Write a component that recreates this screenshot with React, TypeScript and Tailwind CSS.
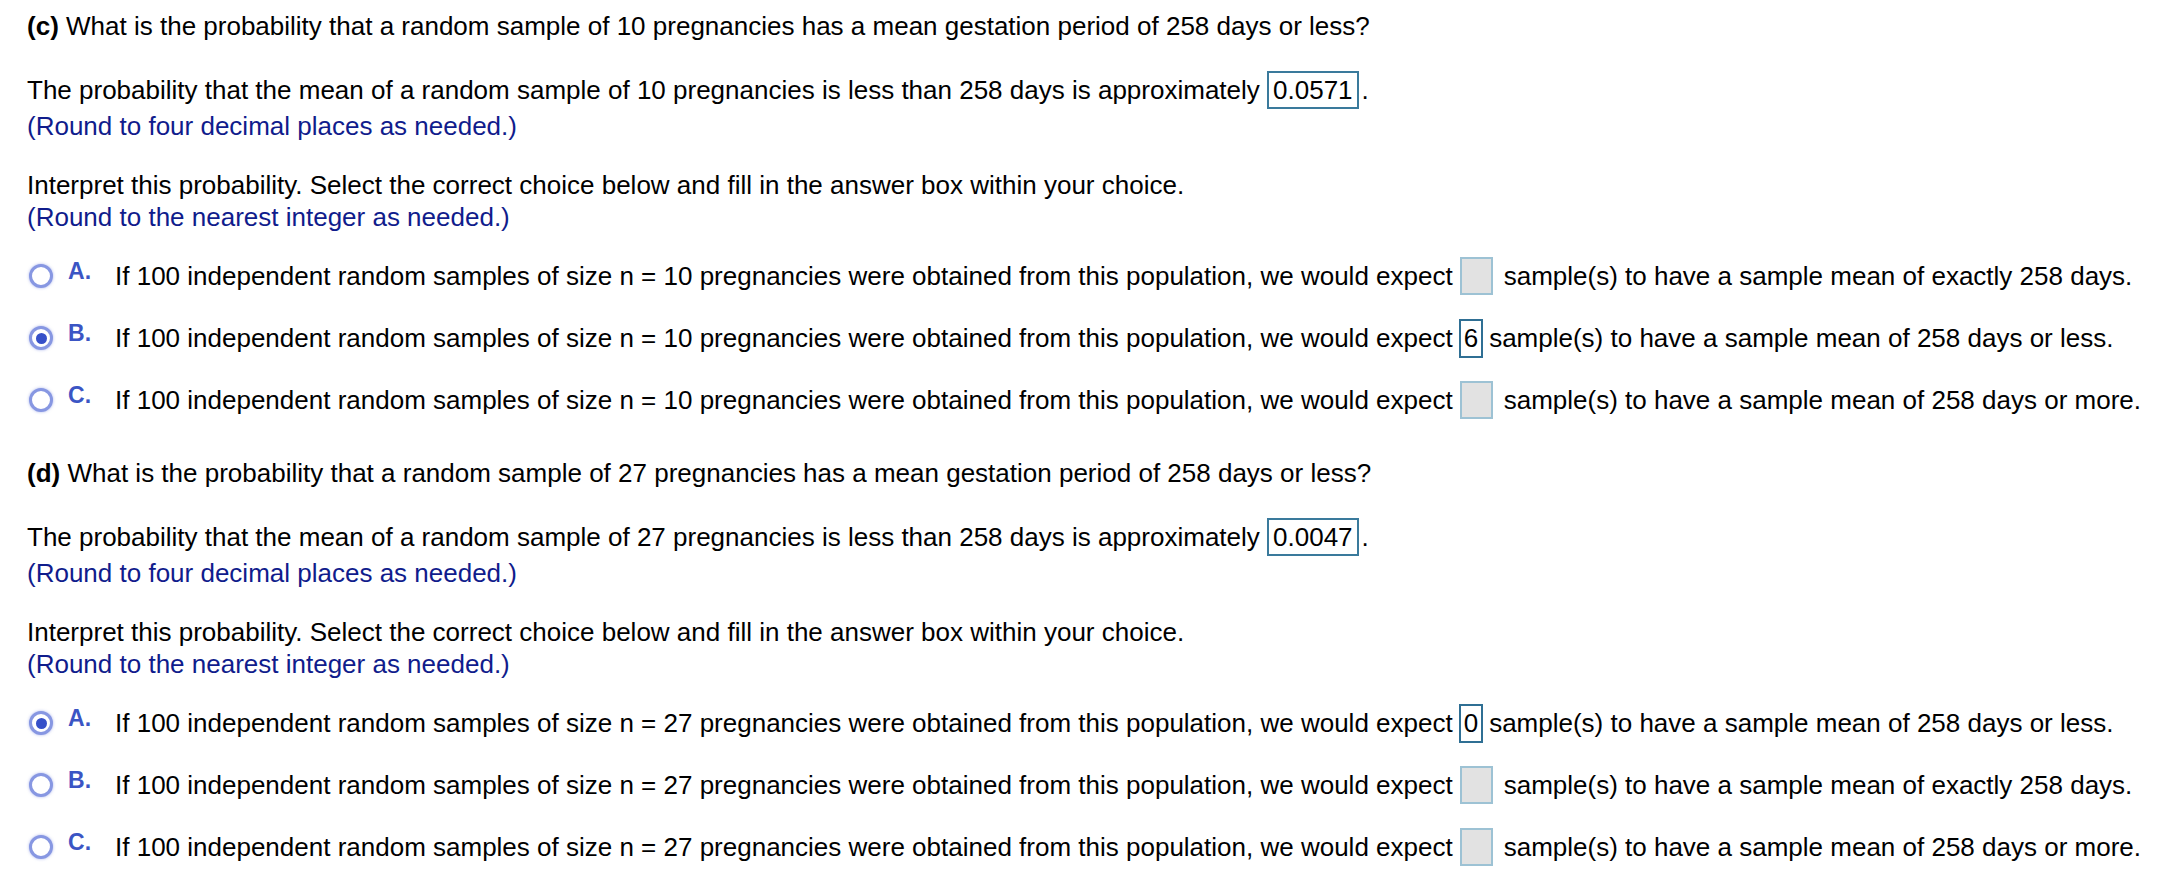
import React from 'react';

type Choice = {
  letter: string;
  selected?: boolean;
  value?: string;
  tail: string;
};

const Radio = ({ selected }: { selected?: boolean }) => (
  <span className="relative flex h-[24px] w-[24px] shrink-0 items-center justify-center rounded-full border-[3px] border-[#8797e2] bg-white shadow-[0_0_3px_rgba(90,110,220,0.5)]">
    {selected && <span className="h-[11px] w-[11px] rounded-full bg-[#3650c9]" />}
  </span>
);

const AnswerBox = ({ value }: { value?: string }) =>
  value ? (
    <span className="mx-[6px] inline-flex h-[39px] items-center border-2 border-[#2f6f94] px-[3px] leading-none">{value}</span>
  ) : (
    <span className="ml-[7px] mr-[11px] inline-block h-[38px] w-[33px] border-2 border-[#9dc2d4] bg-[#e2e2e2]" />
  );

const ChoiceRow = ({ n, c }: { n: number; c: Choice }) => (
  <div className="flex h-[40px] items-center">
    <div className="ml-[2px] w-[39px]">
      <Radio selected={c.selected} />
    </div>
    <span className="w-[47px] -translate-y-[5px] text-[23px] font-bold text-[#3b55c4]">{c.letter}.</span>
    <span className="flex items-center whitespace-pre">
      {`If 100 independent random samples of size n = ${n} pregnancies were obtained from this population, we would expect`}
      <AnswerBox value={c.value} />
      {c.tail}
    </span>
  </div>
);

const Part = ({
  label,
  n,
  prob,
  choices,
}: {
  label: string;
  n: number;
  prob: string;
  choices: Choice[];
}) => (
  <div>
    <div className="leading-[32px]">
      <span className="font-bold">({label})</span> What is the probability that a random sample of {n} pregnancies has a mean gestation period of 258 days or less?
    </div>
    <div className="mt-[32px] flex h-[32px] items-center whitespace-pre">
      {`The probability that the mean of a random sample of ${n} pregnancies is less than 258 days is approximately `}
      <span className="inline-flex h-[38px] items-center border-2 border-[#3a7a9c] px-[4px] leading-none">{prob}</span>
      <span className="ml-[3px]">.</span>
    </div>
    <div className="mt-[4px] leading-[32px] text-[#101c8c]">(Round to four decimal places as needed.)</div>
    <div className="mt-[27px] leading-[32px]">
      Interpret this probability. Select the correct choice below and fill in the answer box within your choice.
    </div>
    <div className="leading-[32px] text-[#101c8c]">(Round to the nearest integer as needed.)</div>
    <div className="mt-[23px] flex flex-col gap-[22px]">
      {choices.map((c) => (
        <ChoiceRow key={c.letter} n={n} c={c} />
      ))}
    </div>
  </div>
);

export default function App() {
  return (
    <div className="min-h-[884px] w-[2160px] bg-white pl-[27px] pt-[10px] text-[26px] text-black" style={{ fontFamily: '"Liberation Sans", Arial, sans-serif' }}>
      <Part
        label="c"
        n={10}
        prob="0.0571"
        choices={[
          { letter: 'A', tail: 'sample(s) to have a sample mean of exactly 258 days.' },
          { letter: 'B', selected: true, value: '6', tail: 'sample(s) to have a sample mean of 258 days or less.' },
          { letter: 'C', tail: 'sample(s) to have a sample mean of 258 days or more.' },
        ]}
      />
      <div className="mt-[37px]">
        <Part
          label="d"
          n={27}
          prob="0.0047"
          choices={[
            { letter: 'A', selected: true, value: '0', tail: 'sample(s) to have a sample mean of 258 days or less.' },
            { letter: 'B', tail: 'sample(s) to have a sample mean of exactly 258 days.' },
            { letter: 'C', tail: 'sample(s) to have a sample mean of 258 days or more.' },
          ]}
        />
      </div>
    </div>
  );
}
